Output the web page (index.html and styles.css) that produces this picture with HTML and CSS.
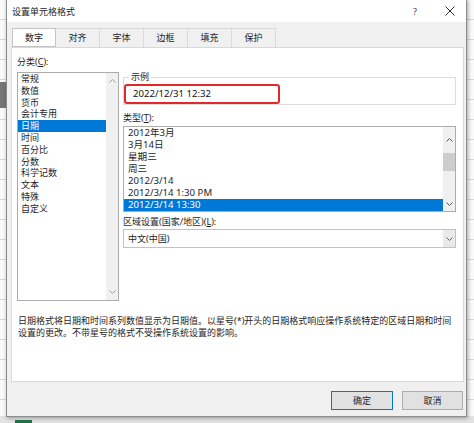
FILE: index.html
```html
<!DOCTYPE html>
<html lang="zh-CN">
<head>
    <meta charset="UTF-8">
    <meta name="viewport" content="width=device-width, initial-scale=1.0">
    <title>设置单元格格式</title>
    <link rel="stylesheet" href="styles.css">
</head>
<body>
    <!-- worksheet behind the dialog -->
    <div class="sheet">
        <div class="sheet-cells"></div>
        <div class="sheet-tabs"><span class="sheet-tab"></span></div>
    </div>

    <div class="dialog">
        <div class="titlebar">
            <span class="title">设置单元格格式</span>
            <span class="title-btn help">?</span>
            <span class="title-btn close">
                <svg width="10" height="10" viewBox="0 0 10 10"><path d="M0.5 0.5 L9.5 9.5 M9.5 0.5 L0.5 9.5" stroke="#333" stroke-width="1" fill="none"/></svg>
            </span>
        </div>

        <div class="tabs">
            <span class="tab active">数字</span>
            <span class="tab">对齐</span>
            <span class="tab">字体</span>
            <span class="tab">边框</span>
            <span class="tab">填充</span>
            <span class="tab">保护</span>
        </div>

        <div class="panel">
            <div class="col-cat">
                <div class="label">分类(<u>C</u>):</div>
                <div class="listbox cat-list">
                    <ul class="items">
                        <li>常规</li>
                        <li>数值</li>
                        <li>货币</li>
                        <li>会计专用</li>
                        <li class="selected">日期</li>
                        <li>时间</li>
                        <li>百分比</li>
                        <li>分数</li>
                        <li>科学记数</li>
                        <li>文本</li>
                        <li>特殊</li>
                        <li>自定义</li>
                    </ul>
                    <div class="vscroll">
                        <span class="sb-btn up"><svg width="7" height="4" viewBox="0 0 7 4"><polyline points="0.5,3.5 3.5,0.5 6.5,3.5" fill="none" stroke="#9a9a9a"/></svg></span>
                        <span class="sb-btn down"><svg width="7" height="4" viewBox="0 0 7 4"><polyline points="0.5,0.5 3.5,3.5 6.5,0.5" fill="none" stroke="#9a9a9a"/></svg></span>
                    </div>
                </div>
            </div>

            <div class="col-fmt">
                <fieldset class="sample">
                    <legend>示例</legend>
                    <div class="sample-box">2022/12/31 12:32</div>
                </fieldset>

                <div class="label">类型(<u>T</u>):</div>
                <div class="listbox type-list">
                    <ul class="items">
                        <li>2012年3月</li>
                        <li>3月14日</li>
                        <li>星期三</li>
                        <li>周三</li>
                        <li>2012/3/14</li>
                        <li>2012/3/14 1:30 PM</li>
                        <li class="selected">2012/3/14 13:30</li>
                    </ul>
                    <div class="vscroll">
                        <span class="sb-btn up"><svg width="7" height="4" viewBox="0 0 7 4"><polyline points="0.5,3.5 3.5,0.5 6.5,3.5" fill="none" stroke="#555"/></svg></span>
                        <span class="sb-thumb"></span>
                        <span class="sb-btn down"><svg width="7" height="4" viewBox="0 0 7 4"><polyline points="0.5,0.5 3.5,3.5 6.5,0.5" fill="none" stroke="#555"/></svg></span>
                    </div>
                </div>

                <div class="label">区域设置(国家/地区)(<u>L</u>):</div>
                <div class="combo">
                    <span class="combo-text">中文(中国)</span>
                    <span class="combo-btn"><svg width="7" height="4" viewBox="0 0 7 4"><polyline points="0.5,0.5 3.5,3.5 6.5,0.5" fill="none" stroke="#666"/></svg></span>
                </div>
            </div>

            <p class="desc">日期格式将日期和时间系列数值显示为日期值。以星号(*)开头的日期格式响应操作系统特定的区域日期和时间设置的更改。不带星号的格式不受操作系统设置的影响。</p>
        </div>

        <div class="footer">
            <button class="btn default">确定</button>
            <button class="btn">取消</button>
        </div>
    </div>
</body>
</html>
```

FILE: styles.css
```css
* { margin: 0; padding: 0; box-sizing: border-box; }
body { width: 474px; height: 423px; overflow: hidden; position: relative; background: #fff; color: #1e1e1e; font-family: "Noto Sans", "Noto Sans CJK SC", sans-serif; font-size: 9px; }

/* worksheet */
.sheet { height: 423px; display: flex; flex-direction: column; background: repeating-linear-gradient(to bottom, #fafafa 0 19px, #d8d8d8 19px 20px); }
.sheet-cells { width: 6px; height: 26px; margin-top: 82px; background: #777; }
.sheet-tabs { margin-top: auto; height: 7px; background: #e2e2e2; display: flex; align-items: flex-end; }
.sheet-tab { width: 17px; height: 3px; margin-left: 15px; background: #217346; }

/* dialog window */
.dialog { position: absolute; left: 6px; top: -1px; width: 461px; height: 418px; background: #f0f0f0; border: 1px solid #8c8c8c; box-shadow: 1px 1px 4px rgba(0,0,0,0.35); display: flex; flex-direction: column; }

.titlebar { height: 22px; background: #fff; display: flex; align-items: center; padding-left: 5px; }
.title { color: #222; }
.title-btn { width: 30px; text-align: center; color: #444; }
.help { margin-left: auto; margin-right: 4px; }
.close { width: 32px; display: flex; justify-content: center; }

.tabs { height: 25px; padding: 6px 0 0 5px; display: flex; }
.tab { width: 44px; height: 19px; line-height: 18px; text-align: center; background: #f0f0f0; border: 1px solid #d9d9d9; border-left: none; border-bottom: none; }
.tab:first-child { border-left: 1px solid #d9d9d9; }
.tab.active { background: #fff; border: 1px solid #c4c4c4; }

.panel { margin: 0 2px 0 4px; height: 335px; background: #fff; border: 1px solid #d9d9d9; padding: 8px 7px 0 5px; display: grid; grid-template-columns: 102px 333px; column-gap: 4px; align-content: start; }

.label { height: 12px; line-height: 12px; white-space: nowrap; }
.col-cat .label { margin-bottom: 4px; }

/* list boxes */
.listbox { border: 1px solid #acacac; background: #fff; display: flex; }
.items { flex: 1; list-style: none; min-width: 0; }
.items li { white-space: nowrap; }
.items li.selected { background: #0078d7; color: #fff; }

.cat-list { height: 229px; }
.cat-list .items li { height: 11.8px; line-height: 11.8px; padding-left: 3px; }

.type-list { height: 86px; margin-top: 2px; font-size: 9.6px; }
.type-list .items li { height: 12px; line-height: 12px; padding-left: 4px; }

.vscroll { width: 12px; background: #f0f0f0; display: flex; flex-direction: column; align-items: center; }
.sb-btn { width: 12px; height: 16px; display: flex; align-items: center; justify-content: center; }
.sb-btn.down { margin-top: auto; }
.type-list .sb-btn.up { height: 26px; }
.type-list .sb-btn.down { height: 14px; }
.sb-thumb { width: 12px; height: 18px; background: #cdcdcd; }

/* sample group */
.sample { margin-top: 15px; border: 1px solid #dcdcdc; padding: 0; }
.sample legend { margin-left: 5px; padding: 0 2px; line-height: 12px; }
.sample-box { width: 156px; height: 20px; margin-top: 1px; border: 2px solid #e2282c; border-radius: 3px; padding-left: 7px; line-height: 16px; font-size: 9.6px; color: #111; }
.col-fmt .label { margin-top: 4px; }
.sample + .label { margin-top: 7px; }

.combo { height: 19px; margin-top: 1px; border: 1px solid #c2c2c2; display: flex; align-items: stretch; }
.combo-text { flex: 1; padding-left: 4px; line-height: 17px; }
.combo-btn { width: 12px; background: #e9e9e9; display: flex; align-items: center; justify-content: center; }

.desc { grid-column: 1 / -1; margin-top: 14px; padding-left: 1px; line-height: 11.5px; }

/* buttons */
.footer { flex: 1; display: flex; justify-content: flex-end; gap: 9px; padding: 9px 3px 0 0; }
.btn { height: 19px; width: 61px; background: #e1e1e1; border: 1px solid #adadad; font-family: inherit; font-size: 9px; color: #1e1e1e; }
.btn.default { width: 62px; border-color: #0078d7; }
```
